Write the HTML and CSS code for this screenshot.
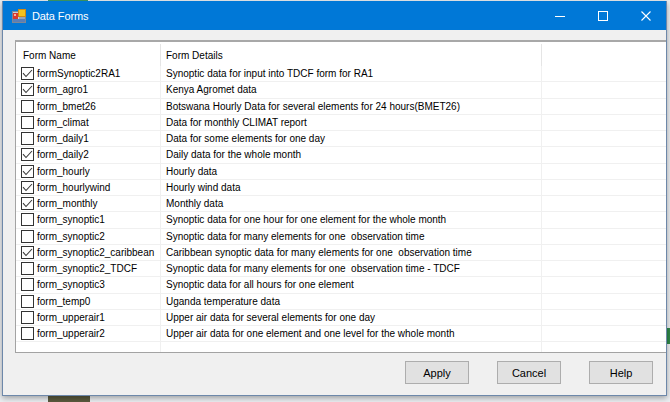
FILE: index.html
```html
<!DOCTYPE html>
<html>
<head>
<meta charset="utf-8">
<link rel="stylesheet" href="styles.css">
<title>Data Forms</title>
</head>
<body>
<div class="desktop">
  <div class="deco deco-top"></div>
  <div class="deco deco-bottom"></div>
  <div class="deco deco-right"></div>
  <div class="window">
    <div class="titlebar">
      <svg class="appicon" width="14" height="14" viewBox="0 0 14 14">
        <rect x="0.5" y="2.5" width="13" height="11" fill="#c9ced8" stroke="#7d8796"/>
        <rect x="1" y="4" width="5" height="6" fill="#d8382e"/>
        <rect x="2" y="5" width="2" height="2" fill="#f4b0a0"/>
        <rect x="6.5" y="0.5" width="7" height="7" fill="#f6c21c" stroke="#d08a12"/>
        <rect x="1" y="10" width="12" height="3" fill="#5a7fb8"/>
        <rect x="7" y="8" width="6" height="2" fill="#9aa6b8"/>
      </svg>
      <span class="title">Data Forms</span>
      <div class="controls">
        <div class="ctl"><svg width="10" height="10" viewBox="0 0 10 10"><line x1="0" y1="5.5" x2="10" y2="5.5" stroke="#fff" stroke-width="1"/></svg></div>
        <div class="ctl"><svg width="10" height="10" viewBox="0 0 10 10"><rect x="0.5" y="0.5" width="9" height="9" fill="none" stroke="#fff" stroke-width="1"/></svg></div>
        <div class="ctl"><svg width="10" height="10" viewBox="0 0 10 10"><path d="M0.5 0.5 L9.5 9.5 M9.5 0.5 L0.5 9.5" stroke="#fff" stroke-width="1.1"/></svg></div>
      </div>
    </div>
    <div class="client">
      <div class="list">
        <div class="header">
          <div class="hcell c1">Form Name</div>
          <div class="hcell c2">Form Details</div>
          <div class="hcell c3"></div>
        </div>
        <div class="rows" id="rows"></div>
        <div class="filler">
          <div class="fcell c1"></div>
          <div class="fcell c2"></div>
          <div class="fcell c3"></div>
        </div>
      </div>
      <div class="buttons">
        <button class="btn">Apply</button>
        <button class="btn">Cancel</button>
        <button class="btn">Help</button>
      </div>
    </div>
  </div>
</div>
<script src="app.js"></script>
</body>
</html>
```

FILE: styles.css
```css
* { box-sizing: border-box; }
html, body { margin: 0; padding: 0; }
body {
  width: 670px;
  height: 402px;
  overflow: hidden;
  font-family: "Liberation Sans", Arial, sans-serif;
}
.desktop {
  position: relative;
  width: 670px;
  height: 402px;
  background: #eceff2;
  overflow: hidden;
}
.deco { position: absolute; }
.deco-top { left: 48px; top: 0; width: 40px; height: 2px; background: #3e9c67; }
.deco-bottom { left: 48px; top: 396px; width: 42px; height: 6px; background: #5b5a3e; }
.deco-right { left: 667px; top: 328px; width: 3px; height: 16px; background: #2f8a4a; }

.window {
  position: absolute;
  left: 2px;
  top: 1px;
  width: 665px;
  height: 395px;
  border: 1px solid #6d88aa;
  border-top: none;
  background: #f0f0f0;
  box-shadow: 0 2px 6px rgba(0,0,0,0.35);
  display: flex;
  flex-direction: column;
  overflow: hidden;
}
.titlebar {
  height: 29px;
  flex: none;
  background: #0078d7;
  display: flex;
  align-items: center;
  padding-left: 9px;
  color: #fff;
}
.appicon { flex: none; }
.title {
  margin-left: 6px;
  font-size: 11px;
  font-family: "Liberation Sans", Arial, sans-serif;
  letter-spacing: -0.1px;
}
.controls { margin-left: auto; display: flex; height: 100%; margin-right: -1px; }
.ctl {
  width: 43px;
  height: 100%;
  display: flex;
  align-items: center;
  justify-content: center;
}
.ctl svg { display: block; }

.client {
  flex: 1;
  display: flex;
  flex-direction: column;
  padding: 10px 0 0 12px;
  overflow: hidden;
}
.list {
  width: 680px;
  height: 313px;
  flex: none;
  background: #fff;
  border: 1px solid #a3a3a3;
  border-top: 2px solid #a8a8a8;
  display: flex;
  flex-direction: column;
  font-size: 10px;
  color: #000;
}
.header { display: flex; height: 24px; flex: none; }
.hcell {
  display: flex;
  align-items: center;
  padding-top: 1px;
}
.hcell.c1 { width: 145px; padding-left: 7px; border-right: 1px solid #e5e5e5; margin-top: 2px; }
.hcell.c2 { width: 381px; padding-left: 5px; border-right: 1px solid #e5e5e5; margin-top: 2px; }
.hcell.c3 { flex: 1; }

.rows { display: flex; flex-direction: column; flex: none; }
.row {
  display: flex;
  height: 16.25px;
  border-bottom: 1px solid #f0f0f0;
}
.cell { display: flex; align-items: center; white-space: nowrap; }
.c1 { width: 145px; flex: none; }
.c2 { width: 381px; flex: none; }
.c3 { flex: 1; }
.cell.c1 { padding-left: 5px; border-right: 1px solid #f0f0f0; }
.cell.c2 { padding-left: 5px; border-right: 1px solid #f0f0f0; }
.cb {
  width: 13px;
  height: 13px;
  flex: none;
  border: 1px solid #333;
  background: #fff;
  display: flex;
  align-items: center;
  justify-content: center;
  margin-right: 3px;
}
.cb svg { display: block; }

.filler { flex: 1; display: flex; }
.fcell.c1 { border-right: 1px solid #f0f0f0; }
.fcell.c2 { border-right: 1px solid #f0f0f0; }

.buttons {
  display: flex;
  justify-content: flex-end;
  gap: 28px;
  margin-top: 8px;
  padding-right: 13px;
}
.btn {
  width: 64px;
  height: 23px;
  background: #e1e1e1;
  border: 1px solid #adadad;
  font-family: "Liberation Sans", Arial, sans-serif;
  font-size: 11px;
  color: #000;
  padding: 0;
  margin: 0;
}
```

FILE: app.js
```js
var data = [
  [1, "formSynoptic2RA1", "Synoptic data for input into TDCF form for RA1"],
  [1, "form_agro1", "Kenya Agromet data"],
  [0, "form_bmet26", "Botswana Hourly Data for several elements for 24 hours(BMET26)"],
  [0, "form_climat", "Data for monthly CLIMAT report"],
  [0, "form_daily1", "Data for some elements for one day"],
  [1, "form_daily2", "Daily data for the whole month"],
  [1, "form_hourly", "Hourly data"],
  [1, "form_hourlywind", "Hourly wind data"],
  [1, "form_monthly", "Monthly data"],
  [0, "form_synoptic1", "Synoptic data for one hour for one element for the whole month"],
  [0, "form_synoptic2", "Synoptic data for many elements for one  observation time"],
  [1, "form_synoptic2_caribbean", "Caribbean synoptic data for many elements for one  observation time"],
  [0, "form_synoptic2_TDCF", "Synoptic data for many elements for one  observation time - TDCF"],
  [0, "form_synoptic3", "Synoptic data for all hours for one element"],
  [0, "form_temp0", "Uganda temperature data"],
  [0, "form_upperair1", "Upper air data for several elements for one day"],
  [0, "form_upperair2", "Upper air data for one element and one level for the whole month"]
];
var check = '<svg width="11" height="11" viewBox="0 0 11 11"><path d="M1 5.2 L4 8.5 L10 2" fill="none" stroke="#3a3a3a" stroke-width="1.1"/></svg>';
var html = "";
data.forEach(function (r) {
  html += '<div class="row">' +
    '<div class="cell c1"><span class="cb">' + (r[0] ? check : "") + '</span><span class="name">' + r[1] + '</span></div>' +
    '<div class="cell c2">' + r[2].replace(/  /g, " &nbsp;") + '</div>' +
    '<div class="cell c3"></div>' +
    '</div>';
});
document.getElementById("rows").innerHTML = html;
```
